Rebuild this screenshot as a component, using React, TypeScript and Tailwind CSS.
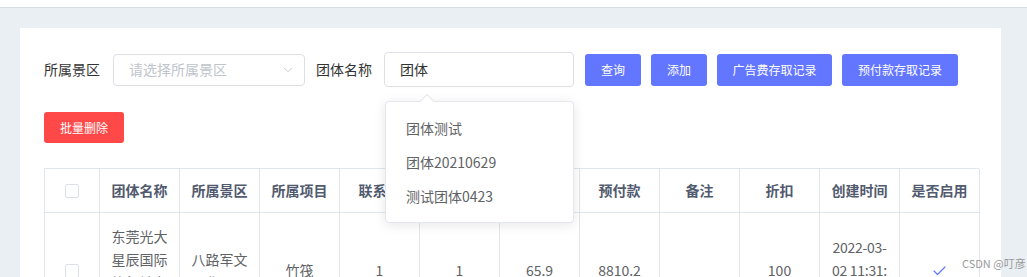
import { ChevronDown } from "lucide-react";

const headers = [
  "团体名称",
  "所属景区",
  "所属项目",
  "联系人",
  "人数",
  "广告费",
  "预付款",
  "备注",
  "折扣",
  "创建时间",
  "是否启用",
];

const row = [
  "东莞光大星辰国际旅行社有限公司",
  "八路军文化园",
  "竹筏",
  "1",
  "1",
  "65.9",
  "8810.2",
  "",
  "100",
];

const suggestions = ["团体测试", "团体20210629", "测试团体0423"];

function Checkbox() {
  return (
    <span className="inline-block h-[14px] w-[14px] rounded-[2px] border border-[#dcdfe6] bg-white" />
  );
}

function Btn({ children, w }: { children: string; w: string }) {
  return (
    <button
      className={`h-[32px] ${w} shrink-0 rounded-[3px] bg-[#6376ff] text-[12px] text-white`}
    >
      {children}
    </button>
  );
}

export default function App() {
  return (
    <div
      className="relative h-[277px] w-[1027px] overflow-hidden bg-[#eaeff4] text-[14px] text-[#606266]"
      style={{ fontFamily: '"Noto Sans CJK SC", "Noto Sans", sans-serif' }}
    >
      <div className="h-[8px] border-b border-[#d8dce5] bg-white" />
      <div className="pl-[20px] pr-[26px] pt-[20px]">
        <div className="h-[300px] bg-white pl-[24px] pt-[24px]">
          {/* search bar */}
          <div className="flex h-[35px] items-center">
            <span className="mr-[13px] text-[#333]">所属景区</span>
            <div className="flex h-[32px] w-[192px] items-center justify-between rounded-[4px] border border-[#dcdfe6] pl-[15px] pr-[9px]">
              <span className="text-[#c0c4cc]">请选择所属景区</span>
              <ChevronDown className="size-[14px] text-[#c0c4cc]" strokeWidth={1.5} />
            </div>
            <span className="ml-[11px] mr-[12px] text-[#333]">团体名称</span>
            <div className="relative h-[35px] w-[190px] shrink-0">
              <div className="flex h-full items-center rounded-[4px] border border-[#dcdfe6] pl-[15px] text-[#333]">
                团体
              </div>
              <div className="absolute left-[1px] top-[49px] z-10 h-[122px] w-[189px] rounded-[4px] border border-[#e4e7ed] bg-white pt-[9px] shadow-[0_2px_12px_rgba(0,0,0,0.1)]">
                <div className="absolute -top-[6px] left-[36px] h-[10px] w-[10px] rotate-45 border-l border-t border-[#e4e7ed] bg-white" />
                {suggestions.map((s) => (
                  <div key={s} className="flex h-[34px] items-center pl-[20px] text-[#606266]">
                    {s}
                  </div>
                ))}
              </div>
            </div>
            <div className="ml-[11px] flex gap-[10px]">
              <Btn w="w-[56px]">查询</Btn>
              <Btn w="w-[56px]">添加</Btn>
              <Btn w="w-[115px]">广告费存取记录</Btn>
              <Btn w="w-[116px]">预付款存取记录</Btn>
            </div>
          </div>

          <button className="mt-[25px] h-[31px] w-[80px] rounded-[3px] bg-[#ff4949] text-[12px] text-white">
            批量删除
          </button>

          {/* table */}
          <div className="mt-[25px] grid w-[935px] grid-cols-[55px_repeat(11,80px)] border-l border-t border-[#dfe6ec]">
            <div className="flex h-[44px] items-center justify-center border-b border-r border-[#dfe6ec]">
              <Checkbox />
            </div>
            {headers.map((h) => (
              <div
                key={h}
                className="flex h-[44px] items-center justify-center border-b border-r border-[#dfe6ec] font-bold text-[#515a6e]"
              >
                {h}
              </div>
            ))}
            <div className="flex h-[116px] items-center justify-center border-b border-r border-[#dfe6ec]">
              <Checkbox />
            </div>
            {row.map((c, i) => (
              <div
                key={i}
                className="flex h-[116px] items-center justify-center border-b border-r border-[#dfe6ec] px-[10px] text-center leading-[23px] [overflow-wrap:anywhere]"
              >
                {c}
              </div>
            ))}
            <div className="flex h-[116px] flex-col items-center justify-center whitespace-nowrap border-b border-r border-[#dfe6ec] text-center leading-[23px] tracking-[-0.3px]">
              <span>2022-03-</span>
              <span>02 11:31:</span>
              <span>26</span>
            </div>
            <div className="flex h-[116px] items-center justify-center border-b border-r border-[#dfe6ec]">
              <svg width="13" height="10" viewBox="0 0 13 10" fill="none">
                <polyline
                  points="1,5 4.5,8.5 12,1"
                  stroke="#6376ff"
                  strokeWidth="1.2"
                  strokeLinecap="round"
                  strokeLinejoin="round"
                />
              </svg>
            </div>
          </div>
        </div>
      </div>
      <div className="absolute left-[962px] top-[255px] text-[11px] text-[#9a9a9a]">
        CSDN @叮彦
      </div>
    </div>
  );
}
